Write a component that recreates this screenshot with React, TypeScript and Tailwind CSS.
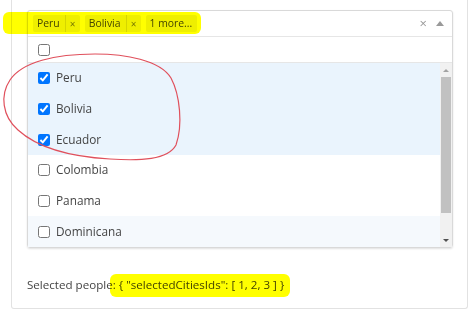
const cities = [
  { id: 1, name: 'Peru', checked: true, bg: 'bg-[#eaf4fd]' },
  { id: 2, name: 'Bolivia', checked: true, bg: 'bg-[#eaf4fd]' },
  { id: 3, name: 'Ecuador', checked: true, bg: 'bg-[#eaf4fd]' },
  { id: 4, name: 'Colombia', checked: false, bg: 'bg-white' },
  { id: 5, name: 'Panama', checked: false, bg: 'bg-white' },
  { id: 6, name: 'Dominicana', checked: false, bg: 'bg-[#f5f9fd]' },
]

function Tag({ label, removable }: { label: string; removable?: boolean }) {
  return (
    <div className="flex h-[17px] items-center rounded-[2px] bg-[#efefef] text-[10.4px] leading-none text-[#444]">
      <span className="pl-[4px] pr-[5px]">{label}</span>
      {removable && (
        <span className="flex h-full w-[15px] items-center justify-center border-l border-[#d6d6d6] text-[10px] text-[#777]">
          ×
        </span>
      )}
    </div>
  )
}

export default function App() {
  return (
    <div className="relative h-[320px] w-[474px] overflow-hidden bg-white font-['Open_Sans',sans-serif] text-[#444]">
      <div className="ml-[11px] h-[309px] w-[457px] rounded-b-[3px] border-x border-b border-[#e2e2e2] px-[15px] pt-[10px]">
        <div className="w-[426px] rounded-[3px] border border-[#d9d9d9] shadow-[0_1px_2px_rgba(0,0,0,0.12)]">
          <div className="flex h-[25px] items-center pl-[5px] pr-[8px]">
            <div className="flex flex-1 items-center gap-[5px]">
              <Tag label="Peru" removable />
              <Tag label="Bolivia" removable />
              <Tag label="1 more..." />
            </div>
            <span className="mr-[9px] text-[13px] leading-none text-[#999]">×</span>
            <svg width="8" height="5" viewBox="0 0 8 5">
              <path d="M0 5 L4 0 L8 5 Z" fill="#999" />
            </svg>
          </div>
          <div className="flex h-[27px] items-center border-y border-[#e6e6e6] pl-[10px]">
            <input type="checkbox" readOnly className="m-0 h-[12px] w-[12px]" />
          </div>
          <div className="flex h-[184px]">
            <div className="flex-1">
              {cities.map((c) => (
                <div
                  key={c.id}
                  className={`flex h-[30.67px] items-center pl-[10px] text-[11.8px] ${c.bg}`}
                >
                  <input
                    type="checkbox"
                    checked={c.checked}
                    readOnly
                    className="m-0 h-[12px] w-[12px]"
                  />
                  <span className="ml-[6px]">{c.name}</span>
                </div>
              ))}
            </div>
            <div className="flex w-[12px] flex-col items-center bg-[#f1f1f1]">
              <div className="flex h-[14px] items-center">
                <svg width="6" height="3" viewBox="0 0 6 3">
                  <path d="M0 3 L3 0 L6 3 Z" fill="#a3a3a3" />
                </svg>
              </div>
              <div className="h-[136px] w-[10px] bg-[#c1c1c1]" />
              <div className="flex-1" />
              <div className="flex h-[14px] items-center">
                <svg width="6" height="3" viewBox="0 0 6 3">
                  <path d="M0 0 L3 3 L6 0 Z" fill="#505050" />
                </svg>
              </div>
            </div>
          </div>
        </div>
        <p className="mt-[28px] text-[11.6px] text-[#444]">
          Selected people: {'{ "selectedCitiesIds": [ 1, 2, 3 ] }'}
        </p>
      </div>

      {/* highlighter marks */}
      <div className="pointer-events-none absolute left-[3px] top-[12px] h-[22px] w-[198px] rounded-[6px] bg-[#ffff00] mix-blend-multiply" />
      <div className="pointer-events-none absolute left-[110px] top-[274px] h-[23px] w-[180px] rounded-[6px] bg-[#ffff00] mix-blend-multiply" />

      {/* red hand-drawn circle */}
      <svg
        className="pointer-events-none absolute left-0 top-0"
        width="474"
        height="320"
        viewBox="0 0 474 320"
      >
        <path
          d="M95 54 C125 54 160 60 171 78 C180 95 183 125 176 145 C168 160 140 161 110 159 C75 157 40 150 18 130 C2 116 0 95 10 80 C22 62 55 54 95 54"
          fill="none"
          stroke="#e0505c"
          strokeWidth="1.2"
        />
      </svg>
    </div>
  )
}
